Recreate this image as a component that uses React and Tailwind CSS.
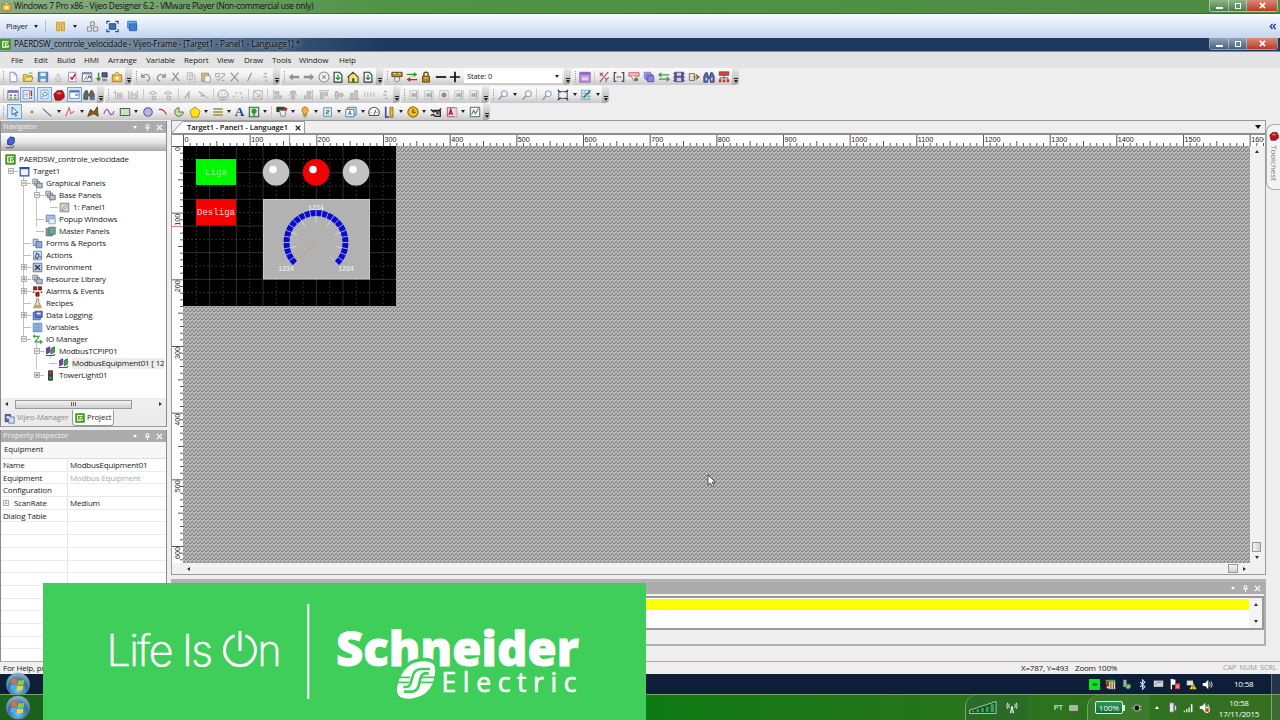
import React from "react";

const UI = "font-['Open_Sans','Noto_Sans',sans-serif]";

/* ---------- icons: each shape is [d, fill, stroke, strokeWidth] on a 14x14 grid ---------- */
const G = "#8f8f8f";
const L = "#a9a9a9";
const ICONS = {
  page: [["M3.5 1.5h5l3 3v8h-8z", "#fbfdff", "#6f8fc0"], ["M8.5 1.5v3h3", "none", "#6f8fc0"]],
  open: [["M1.5 12V4h4l1 1.500h5V12z", "#f4d35a", "#a88a20"], ["M2 12l2.500-5H13l-2 5z", "#fbe68b", "#a88a20"], ["M8 3q2-2 4 0", "none", "#3b9b35"]],
  save: [["M1.500 1.500h11v11h-11z", "#5f9ad0", "#3a6ca8"], ["M4 2h6v4H4z", "#e6f1fb"], ["M4 9h6v3.500H4z", "#dcecf8"]],
  ghost: [["M3 10l4-7 4 7z", "#ddd", "#c4c4c4"], ["M4 12h7", "none", L]],
  check: [["M3 1.500h8.500v11H3z", "#fff", "#8a8fb5"], ["M5 7l2 2.500 4-6", "none", "#d21d3c", 1.8]],
  sim: [["M1.500 2h11v10h-11z", "#fff", "#4f5a8a"], ["M1.500 2h11v2h-11z", "#7d8ac4"], ["M4 10l3-4M7 10l3-4M8 6h3v3", "none", "#333"]],
  down: [["M3 2v8M.8 8L3 11 5.200 8", "none", "#2e8b30", 1.6], ["M7 2h6v5H7z", "#555b8e", "#33375f"], ["M7 9h6v3H7z", "#8b8fb8"]],
  pack: [["M1.500 4.500h11v8h-11z", "#f0bd4a", "#a1741a"], ["M4 4l3-3 3 3", "#f7dd83", "#a1741a"], ["M5 8.500h4M7 6.500v4", "none", "#fff", 1.6]],
  undo: [["M2 3v4h4M2 7q6-6 9 0q1 3-3 5", "none", G, 1.5]],
  redo: [["M12 3v4H8M12 7Q6 1 3 7q-1 3 3 5", "none", G, 1.5]],
  cut: [["M3 2l7 9M10 2l-7 9M2 11h2M9 11h2", "none", G, 1.4]],
  copy: [["M2.500 2h6v8h-6zM5.500 4.500h6v8h-6z", "#e8e8e8", "#b2b2b2"]],
  paste: [["M2 2.500h8v9.500H2z", "#dcbc74", "#a98b4b"], ["M5.500 5.500h6.500v7.500H5.500z", "#eef4fb", "#7d9bc2"]],
  repl: [["M2 3h4v4H2zM8 3h4v3M4 12l8-7M3 10h2M9 11h3", "none", L, 1.2]],
  x: [["M2 2l9 10M11 2l-9 10", "none", G, 1.3]],
  slash: [["M9 2L4 12", "none", G, 1.3]],
  dots: [["M6 2h3v2H6zM5 6h4v2H5zM7 10h3v2H7z", "#b5b5b5"]],
  left: [["M1 7l4.500-4v2.500H13v3H5.500V11z", G]],
  right: [["M13 7L8.500 3v2.500H1v3h7.500V11z", G]],
  stop: [["M7 1.200a5.800 5.800 0 1 0 .01 0z", "#f1f1f1", G, 1.3], ["M5 5l4 4M9 5l-4 4", "none", G, 1.3]],
  pageg: [["M2.500 1.500h6l3 3v8.500h-9z", "#fff", "#333", 1.3], ["M7 4v5M4.500 7.500L7 10l2.500-2.500", "none", "#2a9a30", 1.6]],
  home: [["M1 7l6-5.500L13 7v6H2V7z", "#f3e27c", "#5a4a20", 1.2], ["M6 8.500h2.500V13H6z", "#2c6b2a"]],
  panel: [["M1 1.500h12v5H1z", "#b7942f", "#4b3b10"], ["M4 7h6v4l-3 2-3-2z", "#dfe8ef", "#777"], ["M3 3h2M9 3h2", "none", "#fff"]],
  arrows2: [["M1 4h11M9 2l3 2-3 2", "none", "#2d9a2d", 1.4], ["M2 10h11M5 8l-3 2 3 2", "none", "#c22", 1.4], ["M6 5h3v2H6z", "#e0cf37"]],
  lock: [["M3 6h8v7H3z", "#b8862a", "#5c3f08", 1.1], ["M4.500 6V4q0-2.500 2.500-2.500T9.500 4v2", "none", "#6b4e16", 1.6], ["M4.500 7.500h5v1h-5z", "#f0cc68"]],
  minus: [["M1 7h12", "none", "#111", 2]],
  plus: [["M1 7h12M7 1v12", "none", "#111", 2]],
  winp: [["M1 1.500h12v11.500H1z", "#c79be2", "#7b57a6"], ["M1 1.500h12v3H1z", "#8d6bc0"], ["M3.500 7.500h7v3h-7z", "#f0c9f4"]],
  xy: [["M2 2l4 4M6 2L2 6M12 1L2 13", "none", "#c23a4a", 1.2], ["M8 8l2 2 2.500-2.500M10 10l-1 3", "none", "#7a4aa0", 1.2]],
  brackets: [["M4 2H1.500v10H4M10 2h2.500v10H10", "none", "#3d4675", 1.4], ["M4 7h6", "none", "#b59a24", 1.8]],
  msg: [["M1 2h12v4H1z", "#f3bcbc", "#c25b5b"], ["M4 6l3 6 2-6", "#fff", "#c25b5b"], ["M10 8a2 2 0 1 0 .01 0z", "#2c9b38"]],
  stack: [["M1.500 1.500h7v7h-7z", "#c7c6f3", "#6a67c4"], ["M3.500 3.500h7v7h-7z", "#a9a7ec", "#5a57b9"], ["M5.500 5.500h7v7h-7z", "#8a88e6", "#4b48ad"]],
  swap: [["M1 4.500h12M4 2L1 4.500 4 7", "none", "#3a9c42", 1.3], ["M1 9.500h12M10 7l3 2.500-3 2.500", "none", "#3a9c42", 1.3]],
  film: [["M2 1.500h10v11H2z", "#5d558f", "#463f75"], ["M4.500 2h5v3.500h-5zM4.500 8h5v4h-5z", "#d4cdf4"], ["M0 3h3M0 7h3M0 11h3M11 3h3M11 7h3M11 11h3", "none", "#5d558f"]],
  exit: [["M1.500 3h6v8h-6z", "#e5e0c9", "#665"], ["M6 7h6M9 4l4 3-4 3", "none", "#7d6740", 1.4]],
  bino: [["M1 13V6l2-4h2l1 4h2l1-4h2l2 4v7H8.500V9h-3v4z", "#5568a5", "#333e70"], ["M3 8h1.500v3H3zM9.500 8H11v3H9.500z", "#dfe6ff"]],
  org: [["M1.500 1h11v4h-11z", "#d64545", "#942a2a"], ["M7 5v4M2.500 11V8h9v3", "none", "#7a4a4a"], ["M1 10h3v3H1zM5.500 10h3v3h-3zM10 10h3v3h-3z", "#c23434"]],
  traybars: [["M1 1h12v4H1z", "#4fb52f"], ["M1 3h5v5H1z", "#d22a2a"], ["M5 4h2v9H5zM8 4h2v9H8zM11 4h2v9h-2z", "#f2d6c0"], ["M2 9h3v3H2z", "#e9c531"]],
  grid: [["M1 2h12v10.500H1z", "#fff", "#5967a8"], ["M1 2h12v2.500H1z", "#6a78bd"], ["M3 6.500h3v2H3zM8 6.500h3v2H8z", "#cf5050"], ["M3 9.500h3v2H3zM8 9.500h3v2H8z", "#48a057"]],
  notes: [["M1.500 2h8v10.500h-8z", "#fff", "#7380ad"], ["M3 5h5M3 7h5M3 9h5", "none", "#8c96bd"], ["M12 2v7M12 10.500v2", "none", "#cc2020", 1.8]],
  zoomd: [["M2.500 1.500h9v11h-9z", "#f5faff", "#6f9cc7"], ["M7.500 4a2.500 2.500 0 1 0 .01 0zM5.500 8.500L3.500 11", "none", "#3e78ac", 1.2]],
  redbox: [["M1 6l4-4h6l2 4v4l-4 3H3z", "#b3151c", "#7d0c10"], ["M3 5l4-2 4 2-4 2z", "#e35a5a"]],
  window: [["M1 2h12v10H1z", "#fff", "#5872a8"], ["M1 2h12v2.500H1z", "#4d77c4"], ["M8 6h4v3H8z", "#7aa2da"]],
  binog: [["M1 12V6l2-4h2l1 4h2l1-4h2l2 4v6H8.500V8h-3v4z", "#666", "#444"], ["M9 9h4v4H9z", "#4b77c4"]],
  g1: [["M2 4h2M4 2v10M6.500 5h5v6h-5zM8 7h2v2H8z", "none", L]],
  g2: [["M2 2v10M4 4h3M4.500 6h6v5h-6zM6 8h3M12 2v10", "none", L]],
  g3: [["M3 5q4-4 8 0M3 5q4 3 8 0M6 9h4v3H6z", "none", L, 1.1]],
  g4: [["M3 11l5-7v7", "none", L, 1.4]],
  g4b: [["M2 3l7 5h-5M11 10h2", "none", L, 1.4]],
  face: [["M7 1.200a5.800 5.800 0 1 0 .01 0zM4 9q3 2 6 0M5 5v1M9 5v1", "none", G, 1.1]],
  g5: [["M2 10V8M4 5l2-1M9 4l2 2M12 9v2", "none", L, 1.4]],
  g6: [["M2 2h10v10H2zM2 2l10 10M5 9h4V5", "none", L]],
  al: [["M2 1v12", "none", L], ["M4 3h4v3H4zM4 8h7v3H4z", "#ccc", L]],
  ac: [["M7 1v12M2 7h10", "none", L], ["M4 3h6v2H4zM5 9h4v2H5z", "#ccc", L]],
  ar: [["M12 1v12", "none", L], ["M6 3h4v3H6zM3 8h7v3H3z", "#ccc", L]],
  at: [["M1 2h12", "none", L], ["M3 4h3v7H3zM8 4h3v4H8z", "#ccc", L]],
  am: [["M1 7h12", "none", L], ["M3 3h3v8H3zM8 5h3v4H8z", "#ccc", L]],
  ab: [["M1 12h12", "none", L], ["M3 5h3v6H3zM8 2h3v9H8z", "#ccc", L]],
  hs: [["M1 4v5M4.500 4v5M8 4v5M11.500 4v5", "none", L]],
  sz: [["M2 2h10v10H2z", "none", "#c0c0c0"], ["M4 5h5v4H4z", "#aaa"], ["M10 3v8", "none", "#999"]],
  szc: [["M2 2h10v10H2z", "none", "#c0c0c0"], ["M7 4a3 3 0 1 0 .01 0z", "#8d8d8d"]],
  mag: [["M8.500 2a3.500 3.500 0 1 0 .01 0z", "#eef6fb", "#86a0ae", 1.2], ["M6 8l-4 4.500", "none", "#86a0ae", 1.8]],
  fit: [["M2 3h10v8H2z", "#eaf0f8", "#39465e"], ["M1 1l3 3M13 1l-3 3M1 13l3-3M13 13l-3-3", "none", "#223", 1.4]],
  gridc: [["M1 1.500h12M1 5h12M1 8.500h12M1 12h12M2 1v12M6 1v12M10 1v12", "none", "#64b3bd"], ["M4 10l8-8", "none", "#3a5560", 1.4]],
  arrow: [["M4 1.500v10l2.500-2.500 1.500 4 1.500-.7L8 8.500h3.500z", "#f6f9fc", "#38495c"]],
  dot: [["M5.500 5.500h3v3h-3z", "#b5832b"]],
  line: [["M2 3l10 9", "none", "#3f7391", 1.2]],
  poly: [["M2 12L6 2l2 7 4-3", "none", "#cf5a6a", 1.2]],
  polyf: [["M1 12L4 4l4 3 4-6 1 11-5-3z", "#8a5a1c", "#5f3b0d"]],
  wave: [["M1 9q3-9 6-2t6-1", "none", "#8a4fa0", 1.3]],
  rect: [["M1.500 3h11v8h-11z", "#c6e4c0", "#466a45", 1.2]],
  oval: [["M7 2a5 5 0 1 0 .01 0z", "#b9b3e6", "#5f5a96", 1.2]],
  arc: [["M2 4q6-1 9 6", "none", "#b03a3a", 1.3]],
  pie: [["M7 2v5h5a5 5 0 1 1-5-5z", "#c9dba9", "#5b6b3c", 1.1]],
  pent: [["M7 1l6 5-2.500 7h-7L1 6z", "#ffe11a", "#a28300"]],
  lines: [["M1.500 3.500h11M1.500 7h11M1.500 10.500h11", "none", "#a3893a", 1.7]],
  img: [["M1.500 1.500h11v11h-11z", "#cfe9d2", "#365f3a", 1.2], ["M7 3a3 3 0 1 0 .01 0z", "#2c9a35"], ["M6.300 8h1.400v4H6.300z", "#704a1a"]],
  sw: [["M1 1.500h9v5H1z", "#27502a", "#222"], ["M4 5h8l-2 7H6z", "#eee", "#777"], ["M8 2h5v3H8z", "#b02d2d"]],
  bulb: [["M7 1a4 4 0 0 1 2 7.200V10H5V8.200A4 4 0 0 1 7 1z", "#f2b438", "#a86f10"], ["M5 11h4M5.500 13h3", "none", "#776"]],
  num: [["M2 2h9v10H2z", "#e6f1f6", "#4d7f9b"], ["M5 5h3v2H5v2h3", "none", "#2d627e"]],
  txt: [["M3 1.500h10v9H3z", "#cfe0f6", "#3e6ca5"], ["M1 4h9.500v8.500H1z", "#fff", "#3e6ca5"], ["M4 10.500l1.700-5 1.700 5M4.500 9h2.500", "none", "#3e6ca5"]],
  meter: [["M2 11a6 6 0 1 1 10 0zM7 10l2-5M3 8h1M10 8h1", "#fff", "#4c4c4c", 1.2]],
  bar: [["M2 1v12h4", "none", "#4255a8", 2], ["M7 1.500h3.500V13H7z", "#f1b82b", "#8b6711"]],
  clock: [["M7 1a6 6 0 1 0 .01 0z", "#f1b91f", "#8b6711", 1.2], ["M7 3.500V7.500h3", "none", "#7a5108", 1.4]],
  cam: [["M3 5h8l2-2M1 4l3 3 4-1h4v6H6l-2-2-3 1", "none", "#222", 1.5], ["M7 6h4v4H7z", "#555"]],
  rtxt: [["M1.500 2h11v10.500h-11z", "#f3dede", "#8b4a5a"], ["M3.500 10.500L5.500 4l2 6.500M4.200 8.500h2.600", "none", "#b0122a", 1.5], ["M10 2h2.500v10.500H10z", "#d5d5d5"]],
  trend: [["M1.500 1.500h11v11h-11z", "#f6f6f6", "#4e4e4e"], ["M3 10l2.500-5 2 4L11 3", "none", "#3f9a4a", 1.3]],
  pause: [["M2 1.500h4v11H2zM8 1.500h4v11H8z", "#f0c04a", "#c08d1d"]],
  cubes: [["M5 2h4v4H5zM1.500 7.500h4.500v4.500H1.500zM8 7.500h4.500v4.500H8z", "#e4e4e4", "#888"]],
  full: [["M3.500 4h7v6h-7z", "#3c6fb0", "#24508a"], ["M1 4V1.500h3M10 1.500h3V4M13 10v2.500h-3M4 12.500H1V10", "none", "#24508a", 1.4]],
  unity: [["M2 1.500h10v8H2z", "#7db0ea", "#2c67b5"], ["M4 4.500h8.500v8H4z", "#3f7fd0", "#2c5fa5"]],
  cube: [["M4 4l3-3 4 1v5l-3 3-4-1z", "#3f6ad6", "#1b2f80"], ["M2 12.500h7l2-2", "none", "#666", 1.3]],
  proj: [["M1 1h12v12H1z", "#4aa81e", "#2c7a0d"], ["M11 3.500H3.500v7H7M10 6H7v4h3.500V8", "none", "#fff", 1.4]],
  target: [["M1.500 2h11v10.500h-11z", "#eaf3ff", "#2450a8", 1.5], ["M1 1.500h12v2.500H1z", "#2450a8"]],
  panels: [["M1 1.500h6v6H1zM3.500 4h6v6h-6z", "#d9dee6", "#6a7382"], ["M6 6.500h7v6H6z", "#b7c0ce", "#5b6575"]],
  pencil: [["M1.500 1.500h11v11h-11z", "#d5d3cf", "#777"], ["M4 11l1-3 5-5 1.500 1.500-5 5z", "#f6efe2", "#8a7a66"]],
  popup: [["M1.500 1.500h11v8h-11z", "#a8bfe8", "#5777b5"], ["M5 6h8v6.500H5z", "#e7effb", "#8097bd"]],
  master: [["M1.500 3h8v9.500h-8z", "#7d94b8", "#4b6188"], ["M5 1.500h8v9H5z", "#6da88f", "#3e7565"]],
  forms: [["M1.500 1.500h6v8h-6z", "#c4d2ec", "#53699a"], ["M5 4.500h7.500v8H5z", "#8ea8da", "#405a92"]],
  actions: [["M2 1.500h10v11H2z", "#d7e2f5", "#5871a3"], ["M4 10l2-6 3 2-2 5zM9 9h3", "none", "#33508c", 1.4]],
  env: [["M1.500 1.500h11v11h-11z", "#bcc9dc", "#4e607e"], ["M4 4l6 6M10 4l-6 6", "none", "#293850", 1.8]],
  alarm: [["M2 1h4v4H2zM8 1h4v4H8zM5 8h4v5H5z", "#b81e1e", "#6e0f0f"], ["M1 8h2M11 8h2", "none", "#333", 2]],
  flask: [["M5.500 1h3v4L12 12.500H2L5.500 5z", "#e3d9bd", "#8a8064"], ["M4 9h6l1.500 3.500h-9z", "#c8a93c"]],
  log: [["M1.500 3h9v9.500h-9z", "#8ba0dc", "#3c4f94"], ["M4 1.500h9v8H4z", "#5a73c4", "#33458a"], ["M6 3.500h5v2H6z", "#fff"]],
  vars: [["M1.500 1.500h11v11h-11z", "#8fb4dc", "#5c86b5"], ["M4 4h6M4 7h6M4 10h6", "none", "#6c97c6"]],
  io: [["M2 3h7l-5 7h8M10 8l3 2-3 2M4 1L2 3l2 2", "none", "#3fa047", 1.5]],
  modbus: [["M2 3l4-2v7l-4 2z", "#7b3fc0", "#4a2480"], ["M8 3l4-2v7l-4 2z", "#39a653", "#1e6e33"], ["M1 12h10l2-1.500", "none", "#555", 1.4]],
  tower: [["M4.500 1h5v12h-5z", "#444", "#222"], ["M5.500 2h3v3h-3z", "#d33"], ["M5.500 8.500h3v3h-3z", "#2cb04a"]],
  mgr: [["M1.500 2h7v9h-7z", "#5163a5", "#333f78"], ["M6 5h7v8H6z", "#d5dff2", "#5872a8"], ["M3 4h4v3H3z", "#dfe7fb"]],
};

function Ico({ n, s = "size-[13px]" }) {
  return (
    <svg viewBox="0 0 14 14" className={`${s} shrink-0`}>
      {ICONS[n].map(([d, f, st, w], i) => (
        <path key={i} d={d} fill={f} stroke={st || "none"} strokeWidth={w || 1} />
      ))}
    </svg>
  );
}

const Sep = () => <span className="h-3 w-px shrink-0 bg-[#c9c9c9]" />;
const Caret = ({ c = "border-t-[#222]" }) => (
  <span className={`h-0 w-0 shrink-0 border-x-[2px] border-t-[3px] border-x-transparent ${c}`} />
);

function Bar({ w, items, children }) {
  return (
    <div className={`flex h-[17px] shrink-0 items-center rounded-r-sm bg-linear-to-b from-[#fbfbfb] via-[#eeeeee] to-[#c9c9c9] ${w}`}>
      <span className="ml-[3px] h-[11px] w-0 shrink-0 border-l border-dotted border-[#999]" />
      <div className="flex min-w-0 flex-1 items-center justify-between pr-[2px] pl-[3px]">
        {items.map((n, i) =>
          n === "|" ? <Sep key={i} /> : n === "v" ? <Caret key={i} /> : n[0] === "*" ? (
            <span key={i} className="flex size-[15px] shrink-0 items-center justify-center border border-[#6fa8dc] bg-[#d5e6f7]"><Ico n={n.slice(1)} s="size-[11px]" /></span>
          ) : n === "A" ? (
            <span key={i} className="font-['Liberation_Serif',serif] text-[13px] leading-none font-bold text-[#1c3f94]">A</span>
          ) : <Ico key={i} n={n} s="size-[12px]" />
        )}
        {children}
      </div>
      <div className="flex h-full w-[7px] shrink-0 flex-col items-center justify-end gap-px rounded-r-sm bg-linear-to-b from-[#ececec] to-[#aaaaaa] pb-[2px]">
        <span className="h-px w-1 bg-[#222]" />
        <Caret />
      </div>
    </div>
  );
}

function WinButtons({ tone }) {
  return (
    <div className="mr-[2px] flex h-3 w-[69px] shrink-0 self-start overflow-hidden rounded-b-[3px] border border-t-0 border-white/50">
      <span className={`flex w-[19px] items-center justify-center border-r border-white/40 ${tone}`}><i className="mt-1 h-[2px] w-[7px] bg-white" /></span>
      <span className={`flex w-[18px] items-center justify-center border-r border-white/40 ${tone}`}><i className="size-[6px] border-[1.5px] border-white" /></span>
      <span className="flex flex-1 items-center justify-center bg-linear-to-b from-[#d88a78] to-[#b73a22]">
        <svg viewBox="0 0 8 8" className="size-[7px]"><path d="M1 1l6 6M7 1L1 7" stroke="#fff" strokeWidth="1.800" /></svg>
      </span>
    </div>
  );
}

function PaneHead({ title }) {
  return (
    <div className="flex h-3 shrink-0 items-center bg-[#acacac] pr-[3px] pl-[2px] text-[7.5px] leading-none text-[#f2f2f2]">
      <span className="flex-1">{title}</span>
      <Caret c="border-t-white" />
      <svg viewBox="0 0 8 8" className="ml-[7px] size-[7px]"><path d="M2.500 1h3v3.500h-3zM1.500 4.500h5M4 4.500V8" fill="none" stroke="#fff" /></svg>
      <svg viewBox="0 0 8 8" className="ml-[5px] size-[7px]"><path d="M1 1l6 6M7 1L1 7" stroke="#fff" strokeWidth="1.400" /></svg>
    </div>
  );
}

/* ---------- navigator ---------- */
const TREE = [
  ["proj", "PAERDSW_controle_velocidade", "pl-[4px]", ""],
  ["target", "Target1", "pl-[6px]", "-"],
  ["panels", "Graphical Panels", "pl-[19px]", "-"],
  ["panels", "Base Panels", "pl-[32px]", "-"],
  ["pencil", "1: Panel1", "pl-[46px]", " "],
  ["popup", "Popup Windows", "pl-[32px]", " "],
  ["master", "Master Panels", "pl-[32px]", " "],
  ["forms", "Forms & Reports", "pl-[19px]", " "],
  ["actions", "Actions", "pl-[19px]", " "],
  ["env", "Environment", "pl-[19px]", "+"],
  ["panels", "Resource Library", "pl-[19px]", "+"],
  ["alarm", "Alarms & Events", "pl-[19px]", "+"],
  ["flask", "Recipes", "pl-[19px]", " "],
  ["log", "Data Logging", "pl-[19px]", "+"],
  ["vars", "Variables", "pl-[19px]", " "],
  ["io", "IO Manager", "pl-[19px]", "-"],
  ["modbus", "ModbusTCPIP01", "pl-[32px]", "-"],
  ["modbus", "ModbusEquipment01 [ 12", "pl-[45px]", " "],
  ["tower", "TowerLight01", "pl-[32px]", "+"],
];

const Expander = ({ s }) => (
  <span className="flex w-3 shrink-0 items-center">
    {s === " " ? <i className="ml-[3px] h-px w-2 bg-[#bbb]" /> : (
      <>
        <svg viewBox="0 0 6 6" className="ml-px size-[6px]">
          <path d="M.5.5h5v5h-5z" fill="#f7f7f7" stroke="#999" strokeWidth=".8" />
          <path d={s === "+" ? "M1.500 3h3M3 1.500v3" : "M1.500 3h3"} stroke="#555" strokeWidth=".8" />
        </svg>
        <i className="h-px w-1 bg-[#bbb]" />
      </>
    )}
  </span>
);

function Navigator() {
  return (
    <div className="flex h-[306px] shrink-0 flex-col border-r border-l border-[#8a8a8a] bg-white">
      <PaneHead title="Navigator" />
      <div className="flex h-[18px] shrink-0 items-center bg-linear-to-b from-white via-[#e6e6e6] to-[#a9a9a9] pl-[3px]"><Ico n="cube" /></div>
      <div className="relative flex-1 overflow-hidden bg-white pt-[2px]">
        <svg className="absolute top-[18px] left-[22px] h-[200px] w-8" viewBox="0 0 32 200"><path d="M.5 0v168M13.500 10v48M13.500 172v30M27.500 24v10M27.500 180v10" fill="none" stroke="#c4c4c4" /></svg>
        {TREE.map(([ic, t, pl, e], i) => (
          <div key={i} className={`relative flex h-3 items-center whitespace-nowrap text-[8px] leading-none tracking-[-0.18px] text-[#222] ${pl}`}>
            {e && <Expander s={e} />}
            <Ico n={ic} s="size-[11px]" />
            <span className={i === 17 ? "ml-[3px] flex h-[11px] items-center bg-[#ececec]" : "ml-[3px]"}>{t}</span>
          </div>
        ))}
      </div>
      <div className="flex h-[12px] shrink-0 items-center bg-[#eeeeee] px-1">
        <i className="border-y-[2px] border-r-[3px] border-y-transparent border-r-[#333]" />
        <span className="ml-[7px] flex h-[9px] w-[117px] items-center justify-center gap-px border border-[#9a9a9a] bg-linear-to-b from-[#f3f3f3] to-[#d0d0d0]">
          <i className="h-1 w-px bg-[#666]" /><i className="h-1 w-px bg-[#666]" /><i className="h-1 w-px bg-[#666]" />
        </span>
        <i className="ml-auto border-y-[2px] border-l-[3px] border-y-transparent border-l-[#333]" />
      </div>
      <div className="flex h-[17px] shrink-0 border-b border-[#999] bg-[#ebebeb] text-[7.7px] leading-none">
        <div className="flex w-[71px] items-center gap-[2px] pl-[3px] whitespace-nowrap text-[#888]"><Ico n="mgr" s="size-[11px]" />Vijeo-Manager</div>
        <div className="flex w-[42px] items-center gap-[2px] rounded-b-sm border border-t-0 border-[#999] bg-white pl-[2px] tracking-[-0.1px] text-[#222]"><Ico n="proj" s="size-[10px]" />Project</div>
      </div>
    </div>
  );
}

const PROPS = [
  ["Name", "ModbusEquipment01"], ["Equipment", "Modbus Equipment"], ["Configuration", ""],
  ["ScanRate", "Medium"], ["Dialog Table", ""], ...Array(11).fill(["", ""]),
];

function Inspector() {
  return (
    <div className="mt-[3px] flex min-h-0 flex-1 flex-col overflow-hidden border-r border-l border-[#8a8a8a] bg-white">
      <PaneHead title="Property Inspector" />
      <div className="flex h-[17px] shrink-0 items-center border-b border-[#ddd] bg-[#f7f7f7] pl-[3px] text-[7.7px] text-[#222]">Equipment</div>
      {PROPS.map(([a, b], i) => (
        <div key={i} className="flex h-[12.7px] shrink-0 border-b border-[#ebebeb] text-[8px] leading-[12px] tracking-[-0.18px] whitespace-nowrap text-[#222]">
          <div className="flex w-[67px] items-center border-r border-[#e4e4e4] pl-[2px]">
            {i === 3 && <svg viewBox="0 0 6 6" className="mr-[5px] size-[6px]"><path d="M.5.5h5v5h-5zM1.500 3h3M3 1.500v3" fill="none" stroke="#888" strokeWidth=".7" /></svg>}
            {a}
          </div>
          <div className={i === 1 ? "pl-[2px] text-[#aaa]" : "pl-[2px]"}>{b}</div>
        </div>
      ))}
    </div>
  );
}

/* ---------- canvas ---------- */
const U = 2 / 3;
const range = (n) => Array.from({ length: n }, (_, i) => i);

function HRuler() {
  return (
    <svg className="h-[11px] w-[1081px] shrink-0 bg-white" viewBox="0 0 1081 11">
      {range(163).map((i) => {
        const x = i * 10 * U + 0.5;
        return <path key={i} d={`M${x} ${i % 10 === 0 ? 0 : i % 5 === 0 ? 6 : 8}V11`} stroke="#444" strokeWidth=".9" />;
      })}
      {range(17).map((i) => <text key={i} x={i * 100 * U + 1.500} y="6.500" fontSize="7.200" fill="#222" className="font-['Liberation_Sans',sans-serif]">{i * 100}</text>)}
      <path d="M106.500 0v11" stroke="#e08080" />
    </svg>
  );
}

function VRuler() {
  return (
    <svg className="h-[417px] w-[11px] shrink-0 bg-white" viewBox="0 0 11 417">
      {range(63).map((i) => {
        const y = i * 10 * U + 0.5;
        return <path key={i} d={`M${i % 10 === 0 ? 0 : i % 5 === 0 ? 6 : 8} ${y}H11`} stroke="#444" strokeWidth=".9" />;
      })}
      {range(7).map((i) => <text key={i} transform={`translate(7.500 ${i * 100 * U + (i ? 13 : 5)}) rotate(-90)`} fontSize="7.200" fill="#222" className="font-['Liberation_Sans',sans-serif]">{i * 100}</text>)}
      <path d="M0 80.500h11" stroke="#e08080" />
    </svg>
  );
}

function Hmi() {
  return (
    <svg className="absolute top-0 left-0 h-[160px] w-[213px]" viewBox="0 0 213 160">
      <rect width="213" height="160" fill="#000" />
      {range(15).map((i) => <path key={i} d={`M${(i + 1) * 13.333} 0V160`} stroke="#454545" strokeWidth=".7" strokeDasharray={i % 2 ? "none" : "2 2"} />)}
      {range(11).map((i) => <path key={i} d={`M0 ${(i + 1) * 13.333}H213`} stroke="#454545" strokeWidth=".7" strokeDasharray={i % 2 ? "none" : "2 2"} />)}
      <rect x="13" y="13" width="40" height="26" fill="#00f800" />
      <rect x="13" y="53" width="40" height="26.500" fill="#f80000" />
      <g fontSize="9" fill="#ffd9d9" className="font-['Liberation_Mono',monospace]">
        <text x="22" y="28.500" textLength="22" fill="#8df58d">Liga</text>
        <text x="14" y="68.500" textLength="38">Desliga</text>
      </g>
      {[[93, "#c2c2c2"], [133, "#f50000"], [173, "#c2c2c2"]].map(([x, c]) => (
        <g key={x}><circle cx={x} cy="26.300" r="13.300" fill={c} /><circle cx={x - 3} cy="23.500" r="3.800" fill="#fff" /></g>
      ))}
      <rect x="80.500" y="53.500" width="106" height="79.500" fill="#b2b2b2" stroke="#c9c9c9" />
      <path d="M112.200 117.300A29.500 29.500 0 1 1 153.800 117.300" fill="none" stroke="#0a0ad2" strokeWidth="6" />
      {range(25).map((i) => {
        const a = ((135 + i * 11.25) * Math.PI) / 180;
        const r = i % 3 === 0 ? 20 : 26;
        return <path key={i} d={`M${133 + r * Math.cos(a)} ${96.5 + r * Math.sin(a)}L${133 + 33 * Math.cos(a)} ${96.5 + 33 * Math.sin(a)}`} stroke="#e4e4ea" strokeWidth=".7" />;
      })}
      <path d="M133 96.500L114 115.500" stroke="#d0904a" strokeWidth=".9" />
      <g fontSize="7" fill="#f4f4f4" className="font-['Liberation_Mono',monospace]">
        <text x="125" y="64" textLength="16">1234</text>
        <text x="95" y="124.500" textLength="16">1234</text>
        <text x="155" y="124.500" textLength="16">1234</text>
      </g>
    </svg>
  );
}

function Workspace() {
  return (
    <div className="flex h-[455px] w-[1095px] shrink-0 flex-col border border-[#9a9a9a] bg-[#efefef]">
      <div className="flex h-[13px] shrink-0 items-end border-b border-[#8d8d8d]">
        <svg viewBox="0 0 12 12" className="h-3 w-3"><path d="M0 12L10 1q1-1 2-1v12z" fill="#fff" /><path d="M0 12L10 1q1-1 2-1" fill="none" stroke="#999" /></svg>
        <div className="flex h-3 w-[121px] items-center justify-between border-t border-r border-[#999] bg-white pr-[3px] pl-[3px] text-[7.500px] leading-none font-semibold tracking-[-0.1px] whitespace-nowrap text-[#111]">
          Target1 - Panel1 - Language1
          <svg viewBox="0 0 8 8" className="size-[6px]"><path d="M1 1l6 6M7 1L1 7" stroke="#222" strokeWidth="1.500" /></svg>
        </div>
        <span className="mr-[4px] mb-[4px] ml-auto"><i className="block border-x-[3px] border-t-[4px] border-x-transparent border-t-[#111]" /></span>
      </div>
      <div className="flex h-3 shrink-0 border-t border-[#8d8d8d] bg-white pl-[11px]"><HRuler /></div>
      <div className="flex h-[417px] shrink-0">
        <VRuler />
        <div className="relative w-[1067px] shrink-0 overflow-hidden">
          <svg className="absolute inset-0 size-full">
            <defs>
              <pattern id="weave" width="4" height="4" patternUnits="userSpaceOnUse">
                <rect width="4" height="4" fill="#a5a5a5" />
                <path d="M0 0h1v1H0zM2 1h2v1H2zM1 3h1v1H1z" fill="#818181" />
                <path d="M1 1h1v1H1zM0 2h1v1H0zM2 2h1v1H2zM3 0h1v1H3zM3 3h1v1H3z" fill="#c0c0c0" />
              </pattern>
            </defs>
            <rect width="100%" height="100%" fill="url(#weave)" />
          </svg>
          <Hmi />
          <svg viewBox="0 0 10 14" className="absolute top-[328px] left-[524px] h-[14px] w-[10px]"><path d="M1 1v10l2.300-2.200L5 12.500l1.700-.8L5.200 8.200h3.200z" fill="#fff" stroke="#444" strokeWidth=".9" /></svg>
        </div>
        <div className="flex w-[13px] shrink-0 flex-col items-center bg-[#f1f1f1] pt-1">
          <i className="border-x-[2px] border-b-[3px] border-x-transparent border-b-[#333]" />
          <span className="mt-auto h-[10px] w-[9px] border border-[#999] bg-linear-to-r from-[#f5f5f5] to-[#cfcfcf]" />
          <i className="my-1 border-x-[2px] border-t-[3px] border-x-transparent border-t-[#333]" />
        </div>
      </div>
      <div className="flex min-h-0 flex-1 items-center bg-[#f1f1f1] pl-[15px]">
        <i className="border-y-[2px] border-r-[3px] border-y-transparent border-r-[#333]" />
        <span className="ml-auto h-[9px] w-[10px] border border-[#999] bg-linear-to-b from-[#f5f5f5] to-[#cfcfcf]" />
        <i className="mr-[19px] ml-[5px] border-y-[2px] border-l-[3px] border-y-transparent border-l-[#333]" />
      </div>
    </div>
  );
}

function Output() {
  return (
    <div className="mt-[4px] flex h-[67px] w-[1095px] flex-col border-2 border-t border-[#b0b0b0] bg-[#efefef]">
      <div className="bg-[#b4b4b4] pt-[2px]"><PaneHead title="" /></div>
      <div className="mt-[2px] flex h-[34px] shrink-0 border-2 border-[#999] bg-white">
        <div className="flex-1 pt-px"><div className="h-[11px] bg-[#ffff00]" /></div>
        <div className="flex w-[13px] flex-col items-center justify-between bg-[#f3f3f3] py-[5px]">
          <i className="border-x-[2px] border-b-[3px] border-x-transparent border-b-[#333]" />
          <i className="border-x-[2px] border-t-[3px] border-x-transparent border-t-[#333]" />
        </div>
      </div>
    </div>
  );
}

/* ---------- branding overlay ---------- */
const EMBLEM = "M262 126Q300 118 313 136Q320 155 308 190Q290 232 240 236Q205 238 201 215Q200 190 214 165Q232 132 262 126z";

function Brand() {
  return (
    <div className="absolute top-[583px] left-[43px] h-[137px] w-[603px] bg-[#3fce5a]">
      <svg viewBox="43 583 603 137" className="size-full">
        <g fill="#fff" stroke="#fff" strokeWidth=".7" fontSize="43" fontWeight="200" className="font-['Inter',sans-serif]">
          <text x="106.500" y="666" textLength="67">Life</text>
          <text x="182" y="666" textLength="31">Is</text>
          <text x="257.500" y="666" textLength="24" lengthAdjust="spacingAndGlyphs">n</text>
        </g>
        <path d="M234.500 635.700a15.500 15.500 0 1 0 11 0M240 631v20" fill="none" stroke="#fff" strokeWidth="3" />
        <path d="M308.300 604v95" stroke="#fff" strokeWidth="2" />
        <text x="336" y="665.500" textLength="243" lengthAdjust="spacingAndGlyphs" fill="#fff" stroke="#fff" strokeWidth=".8" fontSize="48.500" fontWeight="800" className="font-['Open_Sans',sans-serif]">Schneider</text>
        <text x="441.500" y="691.500" textLength="135" fill="#fff" stroke="#fff" strokeWidth=".6" fontSize="26.500" className="font-['Open_Sans',sans-serif]">Electric</text>
        <g transform="translate(330 620) scale(.33333)" fill="none" stroke="#3fce5a">
          <path d={EMBLEM} strokeWidth="20" />
          <path d={EMBLEM} fill="#fff" stroke="none" />
          <path d="M220 201H228Q239 201 242 189L248 168Q253 147 276 147H300" strokeWidth="8" />
          <path d="M222 215H246Q262 213 266 197L272 173Q276 160 288 160H296" strokeWidth="8" />
          <path d="M196 172H240M194 187H238M276 172H322M272 187H318" strokeWidth="5" />
        </g>
      </svg>
    </div>
  );
}

const Orb = () => (
  <svg viewBox="0 0 26 26" className="h-[25px] w-[26px] shrink-0">
    <defs><radialGradient id="orb" cx=".5" cy=".75" r=".75"><stop offset="0" stopColor="#6fd0f5" /><stop offset=".55" stopColor="#2d6fa8" /><stop offset="1" stopColor="#9fbacb" /></radialGradient></defs>
    <circle cx="13" cy="13" r="12" fill="url(#orb)" stroke="#7b97a8" strokeWidth=".6" />
    <path d="M6.500 7.800q3.300-1.700 6-.1l-.9 4.900q-2.700-1.300-6 .1z" fill="#ee6a2c" />
    <path d="M13.500 8q3 1.400 6.200.1l-.9 4.800q-3.200 1.300-6.200 0z" fill="#8fca3c" />
    <path d="M5.400 13.700q3.200-1.300 6 0l-.9 4.600q-2.800-1.300-6 .1z" fill="#4fa9ec" />
    <path d="M12.400 14q3 1.300 6.200 0l-.9 4.500q-3.200 1.300-6.100 0z" fill="#fbd03b" />
  </svg>
);

const Speaker = () => <svg viewBox="0 0 14 14" className="size-[11px]"><path d="M1 5h3l4-4v12L4 9H1z" fill="#fff" /><path d="M9.500 4.500q2 2.500 0 5M11.500 3q3 4 0 8" fill="none" stroke="#fff" /></svg>;
const Flag = () => <svg viewBox="0 0 14 14" className="size-[12px]"><path d="M2 1v12h1.500V8h4V2z" fill="#fff" /><path d="M7 6h6v7H7z" fill="#d63a3a" /><path d="M8.500 8l3 3.500M11.500 8l-3 3.500" stroke="#fff" /></svg>;

const MENU = [["File", "w-[23px]"], ["Edit", "w-[23px]"], ["Build", "w-[27px]"], ["HMI", "w-[24px]"], ["Arrange", "w-[38px]"], ["Variable", "w-[38px]"], ["Report", "w-[33px]"], ["View", "w-[27px]"], ["Draw", "w-[28px]"], ["Tools", "w-[27px]"], ["Window", "w-[40px]"], ["Help", "w-[30px]"]];

export default function App() {
  return (
    <div className={`relative flex h-[720px] w-[1280px] flex-col overflow-hidden bg-[#eeeeee] text-[#222] ${UI}`}>
      <div className="flex h-[14px] shrink-0 items-center border-b border-[#3f6b3c] bg-linear-to-r from-[#8cae85] via-[#4f9345] via-30% to-[#4c8c43] pl-[1px]">
        <Ico n="pack" s="size-[11px]" />
        <span className="ml-[2px] flex-1 text-[8.300px] leading-none tracking-[-0.26px] whitespace-nowrap text-[#111]">Windows 7 Pro x86 - Vijeo Designer 6.2 - VMware Player (Non-commercial use only)</span>
        <WinButtons tone="bg-linear-to-b from-[#8fb58a] to-[#487e43]" />
      </div>
      <div className="flex h-[24px] shrink-0 items-center bg-linear-to-b from-[#fafcff] to-[#c3d5ef] pl-[6px] text-[8px]">
        <span className="w-[28px] tracking-[-0.2px]">Player</span><Caret />
        <span className="mr-[9px] ml-[7px] h-3 w-px bg-[#b5bfd0]" />
        <Ico n="pause" s="size-[11px]" />
        <div className="ml-[7px] flex items-center"><Caret /></div>
        <span className="ml-[9px] flex items-center gap-[7px]"><Ico n="cubes" /><Ico n="full" /><Ico n="unity" s="size-[12px]" /></span>
        <span className="mr-[4px] ml-auto"><svg viewBox="0 0 8 8" className="size-[7px]"><path d="M4 1L1.500 4 4 7M7.500 1L5 4l2.500 3" fill="none" stroke="#2b2fb5" strokeWidth="1.500" /></svg></span>
      </div>
      <div className="flex h-[14px] shrink-0 items-center border-b border-[#7f8b99] bg-linear-to-r from-[#8fa1b4] via-[#1c3a5e] via-30% to-[#1c3a5e]">
        <Ico n="proj" s="size-[11px]" />
        <span className="ml-[3px] flex-1 text-[8.200px] leading-none tracking-[-0.17px] whitespace-nowrap text-[#0c0c0c] [text-shadow:0_0_4px_#b9c6d4,0_0_6px_#9fb0c2]">PAERDSW_controle_velocidade - Vijeo-Frame - [Target1 - Panel1 - Language1] *</span>
        <WinButtons tone="bg-linear-to-b from-[#93a5b8] to-[#44607e]" />
      </div>
      <div className="flex h-4 shrink-0 items-center bg-[#e4e4e4] pl-[11px] text-[8px] tracking-[-0.15px]">
        {MENU.map(([m, w]) => <span key={m} className={`${w} shrink-0`}>{m}</span>)}
      </div>
      <div className="flex h-[17px] shrink-0 gap-[1px]">
        <Bar w="w-[132px]" items={["page", "open", "save", "ghost", "check", "sim", "down", "pack"]} />
        <Bar w="w-[147px]" items={["undo", "redo", "cut", "copy", "paste", "repl", "x", "slash", "dots"]} />
        <Bar w="w-[102px]" items={["left", "right", "stop", "pageg", "home", "pageg"]} />
        <Bar w="w-[187px]" items={["panel", "arrows2", "lock", "minus", "plus"]}>
          <span className="flex h-[13px] w-[98px] shrink-0 items-center justify-between bg-white px-[3px] text-[7.500px] leading-none tracking-[-0.1px]">State: 0<Caret /></span>
        </Bar>
        <Bar w="w-[167px]" items={["winp", "|", "xy", "brackets", "msg", "stack", "swap", "film", "exit", "bino", "org"]} />
      </div>
      <div className="mt-px flex h-[17px] shrink-0 gap-[1px]">
        <Bar w="w-[104px]" items={["grid", "*notes", "*zoomd", "redbox", "*window", "binog"]} />
        <Bar w="w-[295px]" items={["g1", "g2", "|", "g3", "g3", "|", "g4", "g4b", "|", "face", "g5", "|", "g6", "|", "al", "ac", "ar", "at", "am", "ab", "hs", "dots"]} />
        <Bar w="w-[88px]" items={["sz", "sz", "szc", "sz", "sz"]} />
        <Bar w="w-[119px]" items={["mag", "v", "mag", "|", "mag", "fit", "v", "gridc", "v"]} />
      </div>
      <div className="flex h-[17px] shrink-0">
        <Bar w="w-[490px]" items={["*arrow", "dot", "line", "v", "poly", "v", "polyf", "wave", "rect", "v", "oval", "arc", "pie", "pent", "v", "lines", "v", "A", "img", "v", "|", "sw", "v", "bulb", "v", "num", "v", "txt", "v", "meter", "bar", "v", "clock", "v", "cam", "rtxt", "v", "trend"]} />
      </div>
      <div className="flex h-[541px] shrink-0">
        <div className="flex w-[167px] shrink-0 flex-col pt-px"><Navigator /><Inspector /></div>
        <div className="ml-[4px] flex w-[1095px] shrink-0 flex-col"><Workspace /><Output /></div>
        <div className="flex-1 pt-[4px]">
          <div className="flex h-[66px] w-[14px] flex-col items-center rounded-l-lg border border-r-0 border-[#aaa] bg-[#f3f3f3] pt-[6px]">
            <Ico n="redbox" s="size-[10px]" />
            <span className="mt-[4px] text-[8px] leading-none text-[#777] [writing-mode:vertical-rl]">Toolchest</span>
          </div>
        </div>
      </div>
      <div className="flex h-[13px] shrink-0 items-center border-t border-[#aaa] bg-[#f1eeee] text-[8px] leading-none tracking-[-0.2px] whitespace-nowrap">
        <span className="w-[1021px] pl-[3px]">For Help, press F1</span>
        <span className="w-[54px]">X=787, Y=493</span>
        <span className="w-[148px]">Zoom 100%</span>
        <span className="text-[7.400px] text-[#999]">CAP&nbsp; NUM&nbsp; SCRL</span>
      </div>
      <div className="flex h-[20px] shrink-0 items-center bg-[#0d1f38] pl-[5px] text-[7.700px] text-white">
        <Orb />
        <div className="ml-auto flex items-center gap-[5px]">
          <span className="flex size-[11px] items-center justify-center bg-[#10e020] text-[6px] leading-none text-[#064]">◂▸</span>
          <Ico n="traybars" s="size-[11px]" />
          <svg viewBox="0 0 14 14" className="size-[11px]"><path d="M3 1h4v9H3z" fill="#aaa" /><path d="M9 6a3.500 3.500 0 1 0 .01 0z" fill="#4da84a" /><path d="M7.500 9.500l1.500 1.500 2.500-3" fill="none" stroke="#fff" /></svg>
          <svg viewBox="0 0 14 14" className="size-[11px]"><path d="M4 4l6 6-3 3V1l3 3-6 6" fill="none" stroke="#b5d8ff" strokeWidth="1.500" /></svg>
          <svg viewBox="0 0 14 14" className="size-[11px]"><path d="M1 2h12v8H1z" fill="#ccd3d9" /><path d="M3 7l3-3h5" fill="none" stroke="#667" /></svg>
          <Flag />
          <svg viewBox="0 0 14 14" className="size-[11px]"><path d="M1 2h8v6H1z" fill="#ddd" /><path d="M9 5l4.500 8h-9z" fill="#f2d21c" /><path d="M9 8v2.500M9 11.300v1" stroke="#222" /></svg>
          <Speaker />
        </div>
        <span className="ml-[21px] w-[37px] text-[8px] tracking-[-0.2px]">10:58</span>
        <span className="h-full w-[9px] border-l border-[#5d6d80] bg-[#24344a]" />
      </div>
      <div className="flex h-[26px] shrink-0 items-center border-t border-[#77a06b] bg-linear-to-r from-[#1e5f1c] via-[#0c7a12] to-[#356f22] pl-[5px] text-[7.700px] text-white">
        <Orb />
        <div className="ml-auto flex h-full w-[63px] items-center rounded-tl-xl border-l border-[#6fa865] bg-[#2b6b28] pl-[2px]">
          <svg viewBox="0 0 30 14" className="h-[13px] w-[30px]"><path d="M.5 13.500V10L29 .5v13z" fill="#164d22" stroke="#dfeee0" strokeWidth=".8" /><path d="M3 12h3v-1.500H3zM8 12h3V9H8zM13 12h3V7.500h-3zM18 12h3V6h-3zM23 12h4V3.500h-4z" fill="#2fa35a" /></svg>
          <svg viewBox="0 0 14 14" className="ml-[8px] size-[12px]"><path d="M7 5v8M7 5l-2 8M7 5l2 8M4 2q-2 3 0 5M10 2q2 3 0 5M2 1q-2 4 0 7M12 1q2 4 0 7" fill="none" stroke="#fff" /></svg>
        </div>
        <span className="ml-[26px] pb-[2px] text-[8px]">PT</span>
        <span className="ml-[6px] h-[6px] w-[9px] rounded-[1px] bg-[#aab5a5]" />
        <div className="ml-[9px] flex h-full w-[63px] items-center rounded-tl-xl border-l border-[#6fa865] bg-[#3c7a2d] pl-[7px]">
          <span className="flex h-[13px] w-[28px] items-center justify-center rounded-[2px] border border-[#dff0df] bg-linear-to-b from-[#2f9a5a] to-[#0d6b37] text-[8px] leading-none">100%</span>
          <span className="h-[6px] w-[2px] bg-[#dff0df]" />
          <svg viewBox="0 0 14 14" className="ml-[6px] h-[10px] w-[11px]"><path d="M5 3h6v8H5q-3-4 0-8zM11 5h3M11 9h3M0 7h4" fill="#111" stroke="#ddd" /></svg>
        </div>
        <div className="flex w-[60px] items-center gap-[5px] pl-[5px]">
          <i className="border-x-[2px] border-b-[3px] border-x-transparent border-b-white" />
          <svg viewBox="0 0 14 14" className="ml-[3px] size-[11px] shrink-0"><path d="M3 1h6v12H3zM9 3l3 2v6H9z" fill="#e5e5e5" stroke="#555" /></svg>
          <svg viewBox="0 0 14 14" className="size-[11px] shrink-0"><path d="M1 13v-2h1.500v2zM4 13V9h1.500v4zM7 13V7h1.500v6zM10 13V3h2v10z" fill="#fff" /></svg>
          <span className="relative"><Speaker /><i className="absolute right-0 bottom-0 size-[6px] rounded-full border border-white bg-[#d63a2a]" /></span>
        </div>
        <div className="flex w-[58px] flex-col items-center gap-[4px] text-[8px] leading-[7px] tracking-[-0.2px]"><span>10:58</span><span>17/11/2015</span></div>
        <span className="ml-[3px] h-full w-[9px] border-l border-[#7fa877] bg-[#3d6a31]" />
      </div>
      <Brand />
    </div>
  );
}
